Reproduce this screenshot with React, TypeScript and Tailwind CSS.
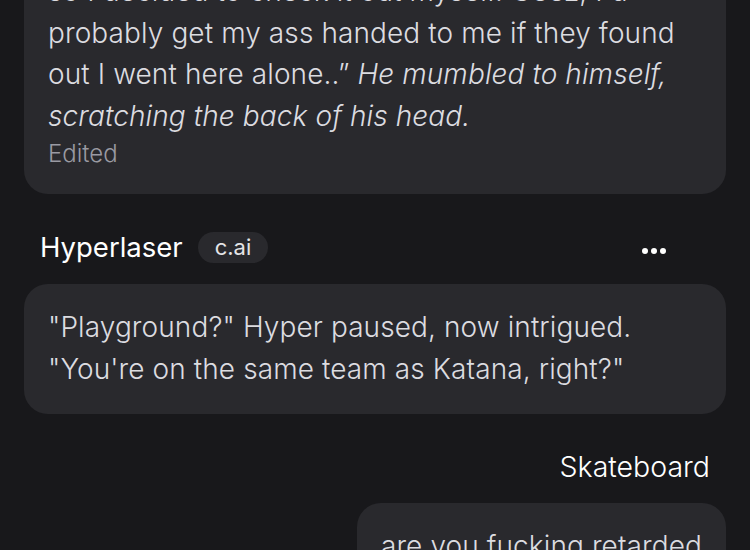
import React from "react";

export default function App() {
  return (
    <div
      className="w-[750px] h-[550px] overflow-hidden bg-[#18181b] text-[#e4e4e7]"
      style={{ fontFamily: "Inter, 'Noto Sans', sans-serif" }}
    >
      <div className="mt-[-52px] flex flex-col">
        <div className="mx-6 rounded-[24px] bg-[#29292d] px-6 pt-[23px] pb-[23px]">
          <p className="text-[28px] font-light leading-[41.5px] tracking-[0.1px] text-[#dcdce0]">
            so I decided to check it out myself. Geez, I'd probably get my ass handed to me if they found out I went here alone..”{" "}
            <em>He mumbled to himself, scratching the back of his head.</em>
          </p>
          <div className="text-[24px] font-light leading-[34px] text-[#9a9aa2]">Edited</div>
        </div>

        <div className="mt-[36px] flex items-center justify-between pl-10 pr-[84px]">
          <div className="flex items-center gap-[15px]">
            <span className="text-[27.5px] leading-[34px] text-white">Hyperlaser</span>
            <span className="rounded-full bg-[#29292d] px-[17px] text-[22px] leading-[31px] text-[#e4e4e7]">c.ai</span>
          </div>
          <div className="flex items-center gap-[3px] pt-2">
            <span className="h-[6px] w-[6px] rounded-full bg-white" />
            <span className="h-[6px] w-[6px] rounded-full bg-white" />
            <span className="h-[6px] w-[6px] rounded-full bg-white" />
          </div>
        </div>

        <div className="mx-6 mt-[20px] rounded-[24px] bg-[#29292d] px-6 pt-[23px] pb-[24px]">
          <p className="text-[28px] font-light leading-[41.5px] tracking-[0.1px] text-[#dcdce0]">
            "Playground?" Hyper paused, now intrigued. "You're on the same team as Katana, right?"
          </p>
        </div>

        <div className="mt-[36px] pr-10 text-right text-[28.5px] font-light leading-[34px] text-white">Skateboard</div>

        <div className="mt-[19px] flex justify-end pr-6">
          <div className="rounded-[24px] bg-[#29292d] px-6 pt-[23px] pb-[24px]">
            <p className="text-[28px] font-light leading-[41.5px] tracking-[0.1px] text-[#dcdce0]">are you fucking retarded</p>
          </div>
        </div>
      </div>
    </div>
  );
}
